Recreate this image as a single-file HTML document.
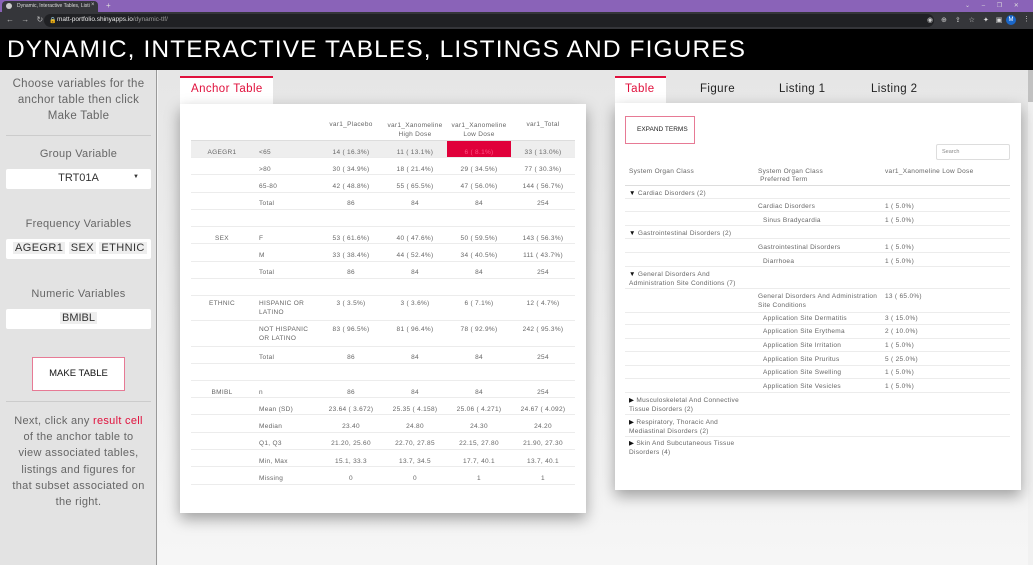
<!DOCTYPE html>
<html><head><meta charset="utf-8"><style>
*{margin:0;padding:0;box-sizing:border-box}
body{width:1033px;height:565px;overflow:hidden;position:relative;background:#f4f4f4;font-family:"Liberation Sans",sans-serif;color:#555}
.a{position:absolute;white-space:nowrap}
.t{font-size:6.5px;color:#666;letter-spacing:.3px}
.c{text-align:center;width:70px}
.ln{position:absolute;height:1px;background:#ececec}
</style></head><body>
<div class="a" style="left:0;top:0;width:1033px;height:12px;background:#8a63b8"></div>
<div class="a" style="left:2px;top:1px;width:96px;height:12px;background:#35363a;border-radius:4px 4px 0 0"></div>
<div class="a" style="left:6px;top:3px;width:6px;height:6px;border-radius:50%;background:#ccc"></div>
<div class="a" style="left:17px;top:3px;font-size:5px;color:#ddd">Dynamic, Interactive Tables, Listi</div>
<div class="a" style="left:91px;top:2px;font-size:6px;color:#ccc">×</div>
<div class="a" style="left:106px;top:1px;font-size:8px;color:#ddd">+</div>
<div class="a" style="left:965px;top:2px;font-size:6px;color:#ddd;word-spacing:10px">⌄ – ❐ ✕</div>
<div class="a" style="left:0;top:12px;width:1033px;height:17px;background:#35363a"></div>
<div class="a" style="left:6px;top:15px;font-size:8px;color:#bbb;word-spacing:5px">← → ↻</div>
<div class="a" style="left:44px;top:14px;width:890px;height:13px;background:#202124;border-radius:7px"></div>
<div class="a" style="left:49px;top:17px;font-size:6px;color:#999">🔒</div>
<div class="a" style="left:57px;top:16px;font-size:6.5px;color:#e8e8e8">matt-portfolio.shinyapps.io<span style="color:#999">/dynamic-tlf/</span></div>
<div class="a" style="left:927px;top:16px;font-size:7px;color:#ccc;word-spacing:6px">◉ ⊕ ⇪ ☆</div>
<div class="a" style="left:983px;top:16px;font-size:7px;color:#ddd;word-spacing:5px">✦ ▣</div>
<div class="a" style="left:1006px;top:15px;width:10px;height:10px;border-radius:50%;background:#1a67c9;color:#fff;font-size:6px;text-align:center;line-height:10px">M</div>
<div class="a" style="left:1023px;top:15px;font-size:7px;color:#ccc">⋮</div>
<div class="a" style="left:0;top:29px;width:1033px;height:41px;background:#000"></div>
<div class="a" style="left:7px;top:36px;font-size:24.5px;color:#fff;letter-spacing:1.1px">DYNAMIC, INTERACTIVE TABLES, LISTINGS AND FIGURES</div>
<div class="a" style="left:0;top:70px;width:157px;height:495px;background:#e3e3e3;border-right:1px solid #999"></div>
<div class="a" style="left:0;top:76px;width:157px;text-align:center;font-size:11.5px;line-height:16px;color:#666;white-space:normal;letter-spacing:.3px">Choose variables for the<br>anchor table then click<br>Make Table</div>
<div class="a" style="left:6px;top:135px;width:145px;height:1px;background:#ccc"></div>
<div class="a" style="left:0;top:148px;width:157px;text-align:center;font-size:11px;color:#666;letter-spacing:.3px">Group Variable</div>
<div class="a" style="left:6px;top:169px;width:145px;height:20px;background:#fff;border-radius:2px"></div>
<div class="a" style="left:6px;top:172px;width:145px;text-align:center;font-size:11px;color:#333">TRT01A</div>
<div class="a" style="left:133px;top:174px;font-size:6px;color:#333">▼</div>
<div class="a" style="left:0;top:218px;width:157px;text-align:center;font-size:11px;color:#666;letter-spacing:.3px">Frequency Variables</div>
<div class="a" style="left:6px;top:239px;width:145px;height:20px;background:#fff;border-radius:2px"></div>
<div class="a" style="left:13px;top:242px;font-size:11px;color:#333;letter-spacing:.4px"><span style="background:#eee;padding:0 2px">AGEGR1</span> <span style="background:#eee;padding:0 2px">SEX</span> <span style="background:#eee;padding:0 2px">ETHNIC</span></div>
<div class="a" style="left:0;top:288px;width:157px;text-align:center;font-size:11px;color:#666;letter-spacing:.3px">Numeric Variables</div>
<div class="a" style="left:6px;top:309px;width:145px;height:20px;background:#fff;border-radius:2px"></div>
<div class="a" style="left:6px;top:312px;width:145px;text-align:center;font-size:11px;color:#333"><span style="background:#eee;padding:0 2px">BMIBL</span></div>
<div class="a" style="left:32px;top:357px;width:93px;height:34px;background:#fff;border:1px solid #e77a95"></div>
<div class="a" style="left:32px;top:368px;width:93px;text-align:center;font-size:9.5px;color:#111">MAKE TABLE</div>
<div class="a" style="left:6px;top:401px;width:145px;height:1px;background:#ccc"></div>
<div class="a" style="left:0;top:413px;width:157px;text-align:center;font-size:11px;line-height:16.2px;color:#666;white-space:normal;letter-spacing:.3px">Next, click any <span style="color:#e0103c">result cell</span><br>of the anchor table to<br>view associated tables,<br>listings and figures for<br>that subset associated on<br>the right.</div>
<div class="a" style="left:158px;top:70px;width:870px;height:495px;background:linear-gradient(#e6e6e6,#f6f6f6)"></div>
<div class="a" style="left:1028px;top:70px;width:5px;height:495px;background:#f1f1f1"></div>
<div class="a" style="left:1028px;top:70px;width:5px;height:32px;background:#c1c1c1"></div>
<div class="a" style="left:180px;top:76px;width:93px;height:29px;background:#fff;border-top:2px solid #e0103c"></div>
<div class="a" style="left:191px;top:83px;font-size:11.5px;color:#e0103c;letter-spacing:.4px">Anchor Table</div>
<div class="a" style="left:180px;top:104px;width:406px;height:409px;background:#fff;box-shadow:0 6px 14px rgba(0,0,0,.35)"></div>
<div class="a t c" style="left:316px;top:121px">var1_Placebo</div>
<div class="a t c" style="left:380px;top:121px;text-align:center;line-height:9px">var1_Xanomeline<br>High Dose</div>
<div class="a t c" style="left:444px;top:121px;text-align:center;line-height:9px">var1_Xanomeline<br>Low Dose</div>
<div class="a t c" style="left:508px;top:121px">var1_Total</div>
<div class="a" style="left:191px;top:140px;width:384px;height:17px;background:#eee;border-top:1px solid #ddd"></div>
<div class="a" style="left:447px;top:141px;width:64px;height:16px;background:#e0003a"></div>
<div id="at"></div>
<div class="a" style="left:615px;top:76px;width:51px;height:28px;background:#fff;border-top:2px solid #e0103c"></div>
<div class="a" style="left:625px;top:83px;font-size:11.5px;color:#e0103c;letter-spacing:.4px">Table</div>
<div class="a" style="left:700px;top:83px;font-size:11.5px;color:#222;letter-spacing:.4px">Figure</div>
<div class="a" style="left:779px;top:83px;font-size:11.5px;color:#222;letter-spacing:.4px">Listing 1</div>
<div class="a" style="left:871px;top:83px;font-size:11.5px;color:#222;letter-spacing:.4px">Listing 2</div>
<div class="a" style="left:615px;top:103px;width:406px;height:387px;background:#fff;box-shadow:0 6px 14px rgba(0,0,0,.35)"></div>
<div class="a" style="left:625px;top:116px;width:70px;height:28px;border:1px solid #e77a95"></div>
<div class="a" style="left:637px;top:126px;font-size:6.5px;color:#222">EXPAND TERMS</div>
<div class="a" style="left:936px;top:144px;width:74px;height:16px;border:1px solid #ddd;border-radius:2px"></div>
<div class="a" style="left:942px;top:149px;font-size:5.5px;color:#888">Search</div>
<div class="a t" style="left:629px;top:168px">System Organ Class</div>
<div class="a t" style="left:758px;top:168px;line-height:8px">System Organ Class<br>&nbsp;Preferred Term</div>
<div class="a t" style="left:885px;top:168px">var1_Xanomeline Low Dose</div>
<div class="ln" style="left:625px;top:185px;width:385px;background:#ddd"></div>
<div id="rt"></div>
<script>
var H='';
function tx(x,y,s,c){H+='<div class="a t'+(c?' c':'')+'" style="left:'+x+'px;top:'+y+'px;line-height:9px">'+s+'</div>';}
function ln(x,y,w){H+='<div class="ln" style="left:'+x+'px;top:'+y+'px;width:'+w+'px"></div>';}
var rows=[
['AGEGR1','&lt;65','14 ( 16.3%)','11 ( 13.1%)','<span style="color:#f58">6 ( 8.1%)</span>','33 ( 13.0%)',148,157],
['','&gt;80','30 ( 34.9%)','18 ( 21.4%)','29 ( 34.5%)','77 ( 30.3%)',165,174],
['','65-80','42 ( 48.8%)','55 ( 65.5%)','47 ( 56.0%)','144 ( 56.7%)',182,192],
['','Total','86','84','84','254',199,209],
['','','','','','',216,226],
['SEX','F','53 ( 61.6%)','40 ( 47.6%)','50 ( 59.5%)','143 ( 56.3%)',234,243],
['','M','33 ( 38.4%)','44 ( 52.4%)','34 ( 40.5%)','111 ( 43.7%)',251,261],
['','Total','86','84','84','254',268,278],
['','','','','','',285,295],
['ETHNIC','HISPANIC OR<br>LATINO','3 ( 3.5%)','3 ( 3.6%)','6 ( 7.1%)','12 ( 4.7%)',299,320],
['','NOT HISPANIC<br>OR LATINO','83 ( 96.5%)','81 ( 96.4%)','78 ( 92.9%)','242 ( 95.3%)',325,346],
['','Total','86','84','84','254',353,363],
['','','','','','',370,380],
['BMIBL','n','86','84','84','254',388,397],
['','Mean (SD)','23.64 ( 3.672)','25.35 ( 4.158)','25.06 ( 4.271)','24.67 ( 4.092)',405,414],
['','Median','23.40','24.80','24.30','24.20',422,432],
['','Q1, Q3','21.20, 25.60','22.70, 27.85','22.15, 27.80','21.90, 27.30',439,449],
['','Min, Max','15.1, 33.3','13.7, 34.5','17.7, 40.1','13.7, 40.1',457,466],
['','Missing','0','0','1','1',474,484]];
rows.forEach(function(r){var y=r[6];tx(187,y,r[0],1);tx(259,y,r[1]);tx(316,y,r[2],1);tx(380,y,r[3],1);tx(444,y,r[4],1);tx(508,y,r[5],1);ln(191,r[7],384);});
document.getElementById('at').outerHTML=H;
H='';
var rr=[
[629,189,'<span style="color:#111">▼</span> Cardiac Disorders (2)','',198],
[758,202,'Cardiac Disorders','1 ( 5.0%)',211],
[763,216,'Sinus Bradycardia','1 ( 5.0%)',225],
[629,229,'<span style="color:#111">▼</span> Gastrointestinal Disorders (2)','',238],
[758,243,'Gastrointestinal Disorders','1 ( 5.0%)',252],
[763,257,'Diarrhoea','1 ( 5.0%)',266],
[629,270,'<span style="color:#111">▼</span> General Disorders And<br>Administration Site Conditions (7)','',288],
[758,292,'General Disorders And Administration<br>Site Conditions','13 ( 65.0%)',312],
[763,314,'Application Site Dermatitis','3 ( 15.0%)',324],
[763,327,'Application Site Erythema','2 ( 10.0%)',338],
[763,341,'Application Site Irritation','1 ( 5.0%)',351],
[763,355,'Application Site Pruritus','5 ( 25.0%)',365],
[763,368,'Application Site Swelling','1 ( 5.0%)',378],
[763,382,'Application Site Vesicles','1 ( 5.0%)',392],
[629,396,'<span style="color:#111">▶</span> Musculoskeletal And Connective<br>Tissue Disorders (2)','',414],
[629,418,'<span style="color:#111">▶</span> Respiratory, Thoracic And<br>Mediastinal Disorders (2)','',436],
[629,439,'<span style="color:#111">▶</span> Skin And Subcutaneous Tissue<br>Disorders (4)','',0]];
rr.forEach(function(r){tx(r[0],r[1],r[2]);if(r[3])tx(885,r[1],r[3]);if(r[4])ln(625,r[4],385);});
document.getElementById('rt').outerHTML=H;
</script>
</body></html>
